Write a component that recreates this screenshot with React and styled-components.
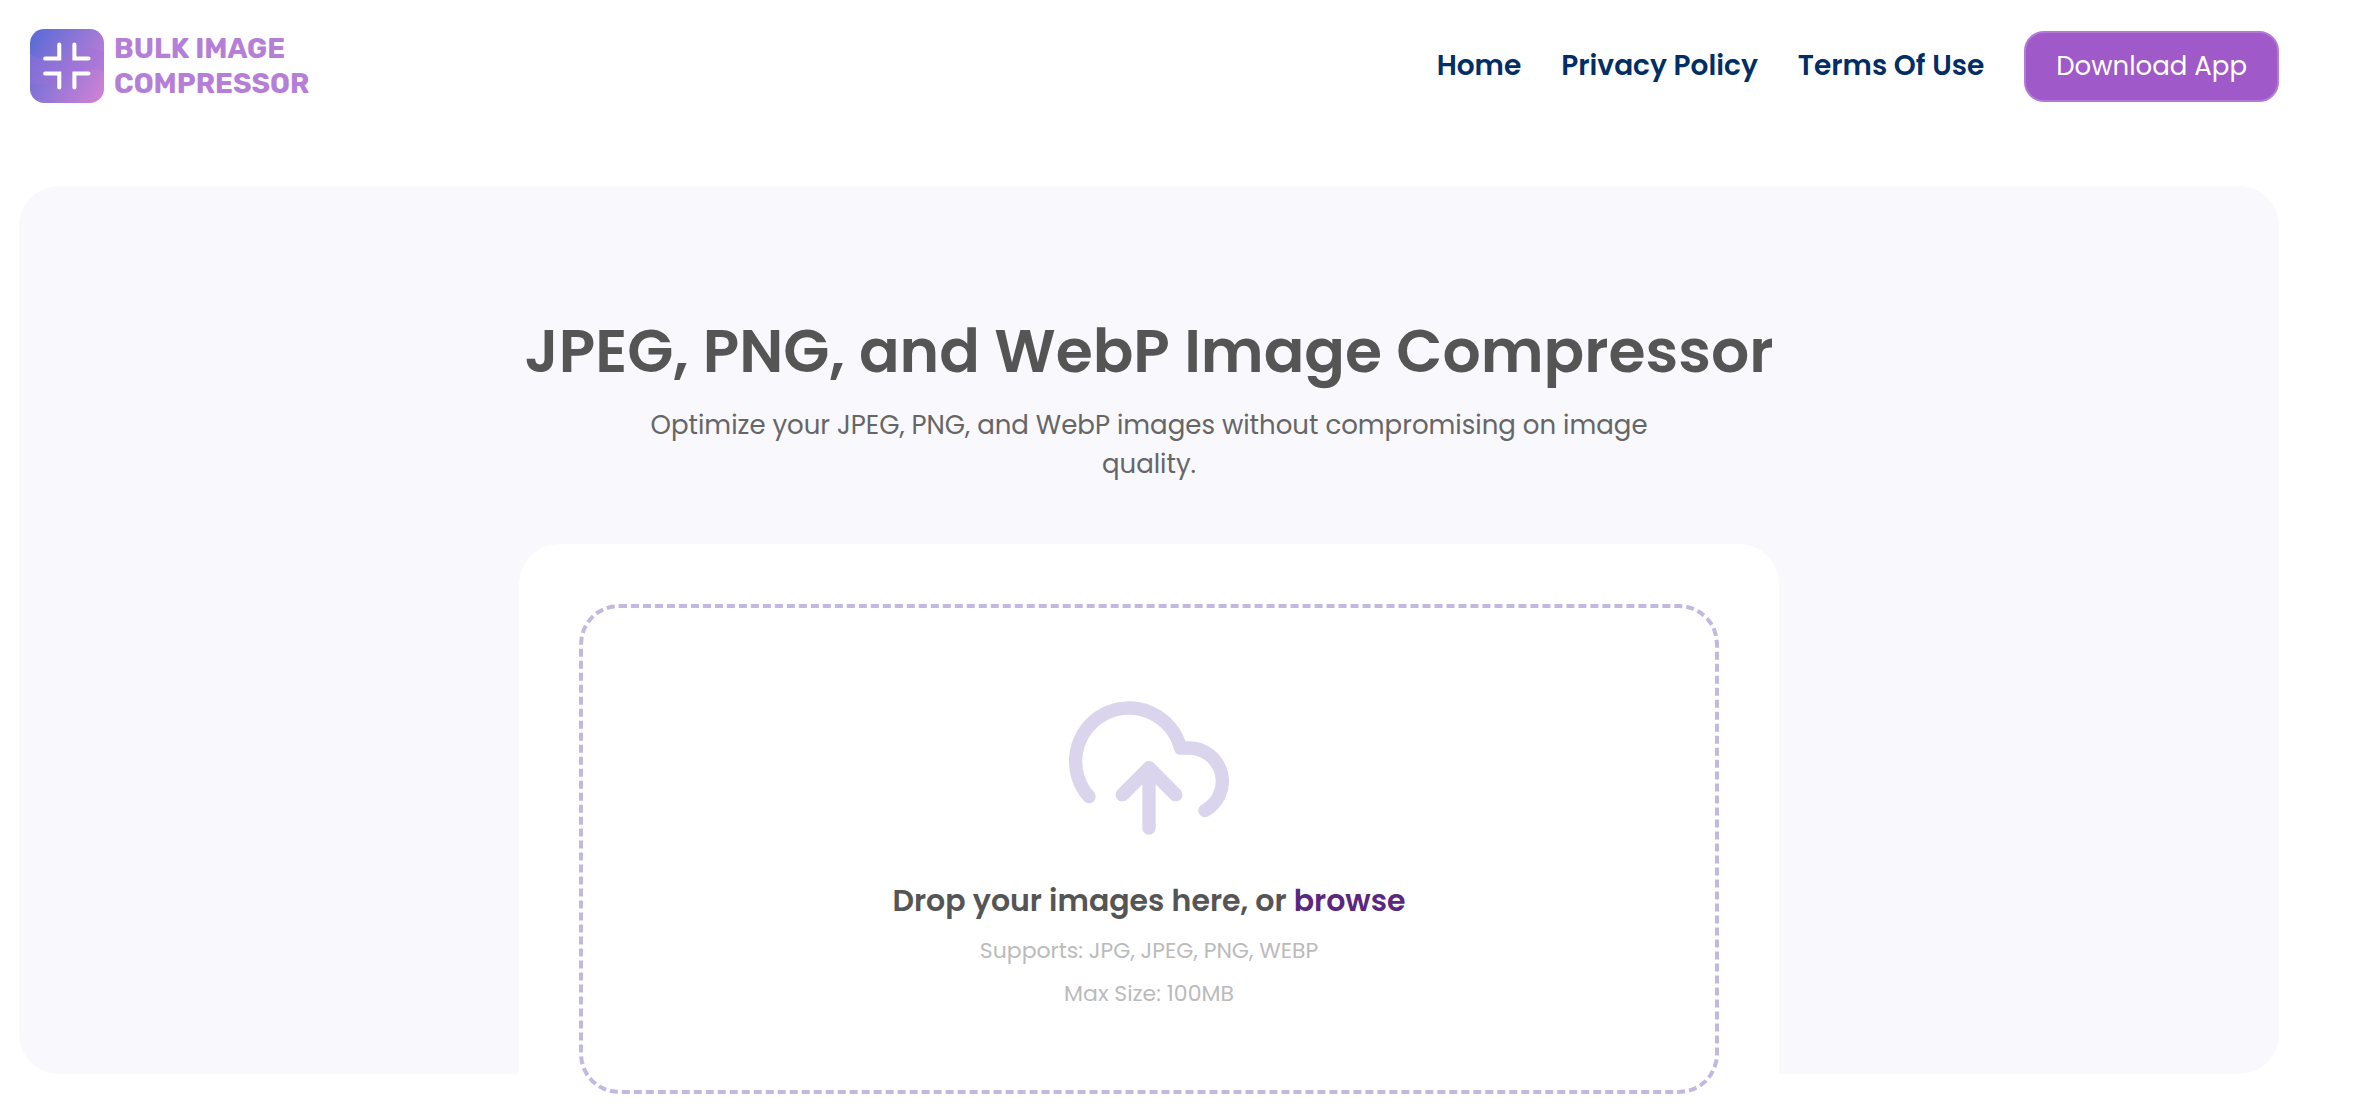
import React from 'react'
import styled, { createGlobalStyle } from 'styled-components'
import { FiUploadCloud } from 'react-icons/fi'

const GlobalStyle = createGlobalStyle`
	*{
		box-sizing:border-box;
	}
	body{
		margin:0;
		background:#fff;
		color:#555;
		font-family:Poppins, Inter, "Open Sans", sans-serif;
	}
	h1, h2, p{
		margin:0;
	}
`
const Page = styled.div`
	padding:0 91px 80px 19px;
`
const Header = styled.header`
	display:flex;
	align-items:center;
	justify-content:space-between;
	padding:29px 0 0 11px;
`
const Brand = styled.a`
	display:flex;
	align-items:center;
	gap:10px;
	color:#b57fd8;
	font-family:Rubik, Inter, sans-serif;
	font-size:28px;
	font-weight:700;
	line-height:35px;
	text-decoration:none;
	text-transform:uppercase;
`
const BrandMark = styled.svg`
	width:74px;
	height:74px;
`
const BrandName = styled.span`
	display:flex;
	flex-direction:column;
`
const Nav = styled.nav`
	display:flex;
	align-items:center;
	gap:40px;
`
const NavLink = styled.a`
	color:#012e64;
	font-size:28px;
	font-weight:600;
	line-height:40px;
	text-decoration:none;
`
const DownloadButton = styled.button`
	height:71px;
	padding:0 30px;
	border:2px solid #b27ad6;
	border-radius:20px;
	background:#a059c8;
	color:#fff;
	font-family:inherit;
	font-size:26px;
	cursor:pointer;
`
const Hero = styled.main`
	display:flex;
	flex-direction:column;
	align-items:center;
	margin-top:83px;
	padding:120px 20px 0;
	border-radius:40px;
	background:#f8f8fd;
	text-align:center;
`
const Title = styled.h1`
	font-size:60px;
	font-weight:600;
	line-height:90px;
`
const Subtitle = styled.p`
	max-width:1020px;
	margin-top:10px;
	color:#666;
	font-size:26px;
	line-height:39px;
`
const Card = styled.section`
	width:100%;
	max-width:1260px;
	margin:60px 0 -80px;
	padding:60px;
	border-radius:40px;
	background:#fff;
`
const DropZone = styled.div`
	display:flex;
	flex-direction:column;
	align-items:center;
	padding:80px 20px;
	border:4px dashed #c3b8e0;
	border-radius:40px;
`
const CloudIcon = styled(FiUploadCloud)`
	width:160px;
	height:160px;
	color:#dad5ed;
`
const DropTitle = styled.h2`
	margin-top:30px;
	font-size:30px;
	font-weight:600;
	line-height:46px;
`
const Browse = styled.label`
	color:#5b2780;
	cursor:pointer;
`
const FileInput = styled.input`
	position:absolute;
	width:1px;
	height:1px;
	opacity:0;
`
const Hint = styled.p`
	margin-top:10px;
	color:#bbb;
	font-size:22px;
	line-height:33px;
`

const Logo = () => (
	<BrandMark viewBox="0 0 220 220" aria-hidden="true">
		<defs>
			<linearGradient id="mark" x1="0" y1="0.2" x2="1" y2="0.8">
				<stop offset="0" stopColor="#5f6cd6" />
				<stop offset="0.5" stopColor="#9577d6" />
				<stop offset="1" stopColor="#cb80d5" />
			</linearGradient>
			<clipPath id="tile">
				<rect width="220" height="220" rx="42" />
			</clipPath>
		</defs>
		<g clipPath="url(#tile)">
			<rect width="220" height="220" fill="url(#mark)" />
			<path d="M0 74C40 98 90 92 130 72S190 56 220 68V126C180 112 150 128 110 145S40 168 0 164Z" fill="#a070d6" fillOpacity="0.4" />
		</g>
		<g fill="none" stroke="#fff" strokeWidth="12" strokeLinecap="round">
			<path d="M45 88H87V46" />
			<path d="M132 46V88H174" />
			<path d="M45 132H87V174" />
			<path d="M132 174V132H174" />
		</g>
	</BrandMark>
)

export default () => (
	<>
		<GlobalStyle />
		<Page>
			<Header>
				<Brand href="#">
					<Logo />
					<BrandName>
						<span>Bulk Image</span>
						<span>Compressor</span>
					</BrandName>
				</Brand>
				<Nav>
					<NavLink href="#">Home</NavLink>
					<NavLink href="#">Privacy Policy</NavLink>
					<NavLink href="#">Terms Of Use</NavLink>
					<DownloadButton type="button">Download App</DownloadButton>
				</Nav>
			</Header>
			<Hero>
				<Title>JPEG, PNG, and WebP Image Compressor</Title>
				<Subtitle>Optimize your JPEG, PNG, and WebP images without compromising on image quality.</Subtitle>
				<Card>
					<DropZone>
						<CloudIcon aria-hidden="true" />
						<DropTitle>Drop your images here, or <Browse htmlFor="images">browse</Browse></DropTitle>
						<FileInput id="images" type="file" accept=".jpg,.jpeg,.png,.webp" multiple />
						<Hint>Supports: JPG, JPEG, PNG, WEBP</Hint>
						<Hint>Max Size: 100MB</Hint>
					</DropZone>
				</Card>
			</Hero>
		</Page>
	</>
)
